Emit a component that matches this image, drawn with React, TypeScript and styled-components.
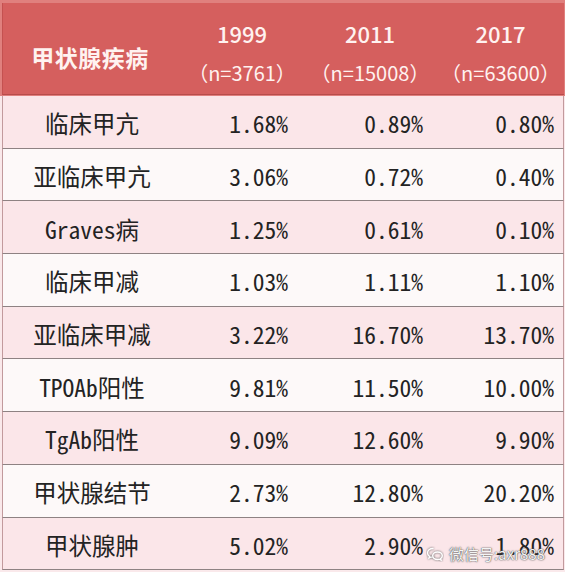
import React from "react";
import styled, { createGlobalStyle } from "styled-components";

const GlobalStyle = createGlobalStyle`
  html, body { margin: 0; padding: 0; background: #fae9eb; }
  body { width: 565px; height: 572px; overflow: hidden; }
`;

const COLS = "178px 122px 134px 1fr";

const Page = styled.div`
  position: relative;
  width: 565px;
  height: 572px;
  background: #fae9eb;
  display: flex;
  flex-direction: column;
`;

const HeaderBand = styled.div`
  height: 96px;
  box-sizing: border-box;
  padding: 3px 1px 1px 2px;
  background: #e0807e;
  display: flex;
`;

const HeaderRow = styled.div`
  flex: 1;
  display: grid;
  grid-template-columns: ${COLS};
  background: #d55f5e;
  border-left: 1px solid #c45150;
  border-bottom: 1px solid #b84c4b;
  color: #fff2f0;
  font-family: "Noto Sans CJK SC", "Noto Sans", sans-serif;
`;

const HeadLabel = styled.div`
  display: flex;
  align-items: center;
  justify-content: center;
  padding-top: 16px;
  padding-right: 4px;
  font-size: 23px;
  font-weight: 700;
  letter-spacing: 0.5px;
`;

const HeadYear = styled.div`
  display: flex;
  flex-direction: column;
  align-items: center;
  justify-content: flex-start;
  gap: 14px;
  padding-top: 17px;
`;

const Year = styled.span`
  font-size: 22px;
  font-weight: 500;
  line-height: 26px;
`;

const Count = styled.span`
  font-size: 20px;
  font-weight: 400;
  line-height: 26px;
`;

const Body = styled.div`
  display: flex;
  flex-direction: column;
  padding: 0 1px 0 2px;
`;

const Row = styled.div<{ $shade: boolean }>`
  display: grid;
  grid-template-columns: ${COLS};
  height: 52.7px;
  box-sizing: border-box;
  background: ${(p) => (p.$shade ? "#fbe6e9" : "#fdf9f9")};
  border-left: 1px solid #c29a9d;
  border-right: 1px solid #c29a9d;
  border-bottom: 1px solid #8e8283;
  color: #232323;
  font-family: "Noto Sans Mono CJK SC", "Noto Sans CJK SC", "DejaVu Sans Mono", monospace;
  font-size: 23.5px;
`;

const Label = styled.div`
  display: flex;
  align-items: center;
  justify-content: center;
  padding-top: 3px;
`;

const Num = styled.div<{ $pad: number }>`
  display: flex;
  align-items: center;
  justify-content: flex-end;
  padding-right: ${(p) => p.$pad}px;
  padding-top: 3px;
  white-space: pre;
`;

const Watermark = styled.div`
  position: absolute;
  right: 20px;
  bottom: 8px;
  display: flex;
  align-items: center;
  gap: 5px;
  color: rgba(255, 255, 255, 0.95);
  font-family: "Noto Sans CJK SC", sans-serif;
  font-size: 15px;
  text-shadow: 0 0 1px #444, 0 0 2px #666;
`;

const rows: [string, string, string, string][] = [
  ["临床甲亢", "1.68%", "0.89%", "0.80%"],
  ["亚临床甲亢", "3.06%", "0.72%", "0.40%"],
  ["Graves病", "1.25%", "0.61%", "0.10%"],
  ["临床甲减", "1.03%", "1.11%", "1.10%"],
  ["亚临床甲减", "3.22%", "16.70%", "13.70%"],
  ["TPOAb阳性", "9.81%", "11.50%", "10.00%"],
  ["TgAb阳性", "9.09%", "12.60%", "9.90%"],
  ["甲状腺结节", "2.73%", "12.80%", "20.20%"],
  ["甲状腺肿", "5.02%", "2.90%", "1.80%"],
];

const WeChatIcon = () => (
  <svg width="18" height="16" viewBox="0 0 18 16" fill="none">
    <path
      d="M7 2.5c-3.3 0-5.5 2-5.5 4.4 0 1.4.8 2.6 2 3.4l-.5 1.8 2.1-1.1c.6.2 1.2.3 1.9.3"
      stroke="#fff"
      strokeWidth="1.4"
      strokeLinecap="round"
      style={{ filter: "drop-shadow(0 0 1px #555)" }}
    />
    <path
      d="M11.5 6c2.8 0 4.8 1.7 4.8 3.8 0 1.1-.6 2.1-1.6 2.8l.4 1.5-1.8-.9c-.6.2-1.2.3-1.8.3-2.8 0-4.8-1.7-4.8-3.7S8.7 6 11.5 6z"
      stroke="#fff"
      strokeWidth="1.4"
      style={{ filter: "drop-shadow(0 0 1px #555)" }}
    />
  </svg>
);

export default function App() {
  return (
    <Page>
      <GlobalStyle />
      <HeaderBand>
        <HeaderRow>
          <HeadLabel>甲状腺疾病</HeadLabel>
          <HeadYear>
            <Year>1999</Year>
            <Count>（n=3761）</Count>
          </HeadYear>
          <HeadYear>
            <Year>2011</Year>
            <Count>（n=15008）</Count>
          </HeadYear>
          <HeadYear>
            <Year>2017</Year>
            <Count>（n=63600）</Count>
          </HeadYear>
        </HeaderRow>
      </HeaderBand>
      <Body>
        {rows.map((r, i) => (
          <Row key={r[0]} $shade={i % 2 === 0}>
            <Label>{r[0]}</Label>
            <Num $pad={15}>{r[1]}</Num>
            <Num $pad={14}>{r[2]}</Num>
            <Num $pad={9}>{r[3]}</Num>
          </Row>
        ))}
      </Body>
      <Watermark>
        <WeChatIcon />
        <span>微信号:axr888</span>
      </Watermark>
    </Page>
  );
}
